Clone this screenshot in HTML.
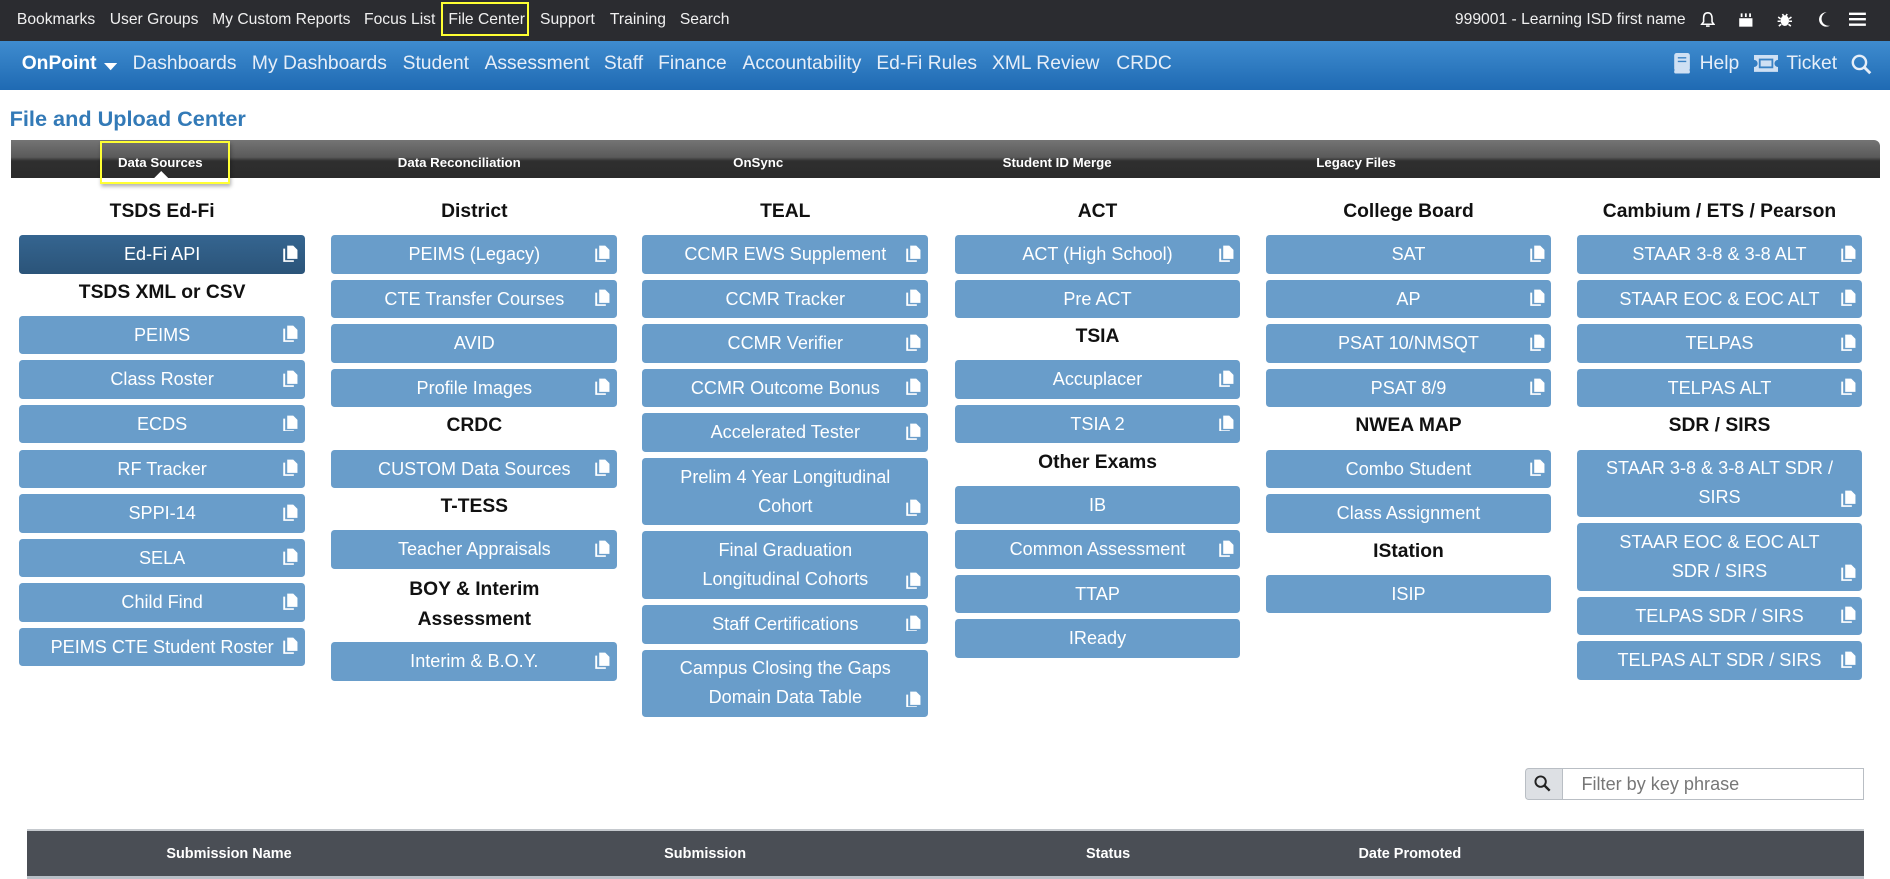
<!DOCTYPE html>
<html><head><meta charset="utf-8"><style>
html,body{margin:0;padding:0;background:#fff;overflow:hidden}
#w{zoom:1.2054;width:1568px;height:729px;position:relative;font-family:"Liberation Sans",Arial,sans-serif}
.top{position:absolute;left:0;top:0;width:1568px;height:34px;background:#2b2c30;color:#f0f0f0;font-size:13px}
.top span{position:absolute;top:9px}
.nav{position:absolute;left:0;top:34px;width:1568px;height:41px;background:linear-gradient(#3f8ccf,#1f6ab3);color:#e6eef8;font-size:16px}
.nav span{position:absolute;top:10px}
h1{position:absolute;left:8px;top:88px;margin:0;font-size:18px;color:#337ab7;font-weight:bold}
.tabs{position:absolute;left:9px;top:116px;width:1551px;height:32px;background:linear-gradient(#747474,#5a5a5a 45%,#2f2f2f 55%,#2b2b2b);border-top-right-radius:5px}
.tabs span{position:absolute;top:13px;width:248px;text-align:center;color:#fff;font-size:11px;font-weight:bold}
.col{position:absolute;top:148px;width:237px;padding-top:17px}
.h{height:30px;line-height:22px;text-align:center;font-weight:bold;font-size:16px;color:#111}
.b{height:32px;line-height:32px;margin-bottom:5px;background:#699dca;border-radius:3px;color:#fff;text-align:center;font-size:15px;position:relative}
.b.t{height:56px;line-height:24px;padding:4px 22px 0;box-sizing:border-box}
.b.d{background:linear-gradient(#356590,#2b5479)}
.b svg{position:absolute;right:5px;top:8px}
.b.t svg{top:auto;bottom:8px}
</style></head><body><div id="w">
<div class="top">
<span style="left:14px">Bookmarks</span><span style="left:91px">User Groups</span><span style="left:176px">My Custom Reports</span><span style="left:302px">Focus List</span><span style="left:372px">File Center</span><span style="left:448px">Support</span><span style="left:506px">Training</span><span style="left:564px">Search</span>
<div style="position:absolute;left:366px;top:2px;width:73px;height:28px;border:2px solid #ffff33;box-sizing:border-box"></div>
<span style="left:1207px">999001 - Learning ISD first name</span>
<svg style="position:absolute;left:1410px;top:9px" width="13" height="14" viewBox="0 0 13 14"><path d="M6.5 1.5C4 1.5 3 3.5 3 6v3L1.5 11h10L10 9V6c0-2.5-1-4.5-3.5-4.5z" fill="none" stroke="#fff" stroke-width="1.3"/><path d="M5 12.5h3" stroke="#fff" stroke-width="1.3"/></svg>
<svg style="position:absolute;left:1442px;top:9px" width="13" height="14" viewBox="0 0 13 14"><rect x="1" y="6" width="11" height="7" fill="#fff"/><path d="M3 2v3M6.5 2v3M10 2v3" stroke="#fff" stroke-width="1.5"/></svg>
<svg style="position:absolute;left:1474px;top:9px" width="13" height="14" viewBox="0 0 13 14"><ellipse cx="6.5" cy="8" rx="3.5" ry="4.5" fill="#fff"/><path d="M1 5l2 1.5M12 5l-2 1.5M0.5 8.5h2.5M12.5 8.5h-2.5M1.5 12.5l2-1.5M11.5 12.5l-2-1.5M4.5 2.5l1 1.5M8.5 2.5l-1 1.5" stroke="#fff" stroke-width="1.3"/></svg>
<svg style="position:absolute;left:1507px;top:9px" width="12" height="14" viewBox="0 0 12 14"><path d="M8 1a6 6 0 1 0 3 11A5 5 0 0 1 8 1z" fill="#fff"/></svg>
<svg style="position:absolute;left:1534px;top:10px" width="14" height="12" viewBox="0 0 14 12"><path d="M0 1.5h14M0 6h14M0 10.5h14" stroke="#fff" stroke-width="2"/></svg>
</div>
<div class="nav">
<span style="left:18px;color:#fff;font-weight:bold">OnPoint</span>
<svg style="position:absolute;left:86px;top:18px" width="11" height="7" viewBox="0 0 11 7"><path d="M0 0h11L5.5 6z" fill="#fff"/></svg>
<span style="left:110px">Dashboards</span><span style="left:209px">My Dashboards</span><span style="left:334px">Student</span><span style="left:402px">Assessment</span><span style="left:501px">Staff</span><span style="left:546px">Finance</span><span style="left:616px">Accountability</span><span style="left:727px">Ed-Fi Rules</span><span style="left:823px">XML Review</span><span style="left:926px">CRDC</span>
<svg style="position:absolute;left:1388px;top:10px" width="15" height="18" viewBox="0 0 15 18"><rect x="1" y="0" width="13" height="15" rx="2" fill="#cfe0f3"/><rect x="1" y="14" width="13" height="3" rx="1" fill="#cfe0f3"/><path d="M4 4h7M4 7h7" stroke="#3a82c4" stroke-width="1.2"/></svg>
<span style="left:1410px">Help</span>
<svg style="position:absolute;left:1455px;top:12px" width="20" height="14" viewBox="0 0 20 14"><path d="M0 0h20v4a3 3 0 0 0 0 6v4H0v-4a3 3 0 0 0 0-6z" fill="#cfe0f3"/><rect x="4" y="3" width="12" height="8" fill="#3a82c4"/><rect x="5.5" y="4.5" width="9" height="5" fill="#cfe0f3"/></svg>
<span style="left:1482px">Ticket</span>
<svg style="position:absolute;left:1536px;top:11px" width="17" height="17" viewBox="0 0 17 17"><circle cx="7" cy="7" r="5.5" fill="none" stroke="#e6eef8" stroke-width="2"/><path d="M11 11l5 5" stroke="#e6eef8" stroke-width="2.4"/></svg>
</div>
<h1>File and Upload Center</h1>
<div class="tabs">
<span style="left:0">Data Sources</span><span style="left:248px">Data Reconciliation</span><span style="left:496px">OnSync</span><span style="left:744px">Student ID Merge</span><span style="left:992px">Legacy Files</span>
<svg style="position:absolute;left:119px;top:26px" width="12" height="6" viewBox="0 0 12 6"><path d="M0 6L6 0l6 6z" fill="#fff"/></svg>
</div>
<div style="position:absolute;left:83px;top:117px;width:108px;height:36px;border:2px solid #ffff33;box-sizing:border-box;box-shadow:1px 2px 3px rgba(0,0,0,.3)"></div>

<svg width="0" height="0" style="position:absolute"><defs><symbol id="c" viewBox="0 0 13 14"><path d="M3.5 0.5h5l3.5 3.5v7.5h-8.5z" fill="#fff"/><path d="M1 3v10.5h8" fill="none" stroke="#fff" stroke-width="1.6"/></symbol></defs></svg>

<div class="col" style="left:16px">
<div class="h">TSDS Ed-Fi</div>
<div class="b d">Ed-Fi API<svg width="13" height="14"><use href="#c"/></svg></div>
<div class="h">TSDS XML or CSV</div>
<div class="b">PEIMS<svg width="13" height="14"><use href="#c"/></svg></div>
<div class="b">Class Roster<svg width="13" height="14"><use href="#c"/></svg></div>
<div class="b">ECDS<svg width="13" height="14"><use href="#c"/></svg></div>
<div class="b">RF Tracker<svg width="13" height="14"><use href="#c"/></svg></div>
<div class="b">SPPI-14<svg width="13" height="14"><use href="#c"/></svg></div>
<div class="b">SELA<svg width="13" height="14"><use href="#c"/></svg></div>
<div class="b">Child Find<svg width="13" height="14"><use href="#c"/></svg></div>
<div class="b">PEIMS CTE Student Roster<svg width="13" height="14"><use href="#c"/></svg></div>
</div>

<div class="col" style="left:275px">
<div class="h">District</div>
<div class="b">PEIMS (Legacy)<svg width="13" height="14"><use href="#c"/></svg></div>
<div class="b">CTE Transfer Courses<svg width="13" height="14"><use href="#c"/></svg></div>
<div class="b">AVID</div>
<div class="b">Profile Images<svg width="13" height="14"><use href="#c"/></svg></div>
<div class="h">CRDC</div>
<div class="b">CUSTOM Data Sources<svg width="13" height="14"><use href="#c"/></svg></div>
<div class="h">T-TESS</div>
<div class="b">Teacher Appraisals<svg width="13" height="14"><use href="#c"/></svg></div>
<div class="h" style="height:56px;line-height:25px">BOY &amp; Interim<br>Assessment</div>
<div class="b">Interim &amp; B.O.Y.<svg width="13" height="14"><use href="#c"/></svg></div>
</div>

<div class="col" style="left:533px">
<div class="h">TEAL</div>
<div class="b">CCMR EWS Supplement<svg width="13" height="14"><use href="#c"/></svg></div>
<div class="b">CCMR Tracker<svg width="13" height="14"><use href="#c"/></svg></div>
<div class="b">CCMR Verifier<svg width="13" height="14"><use href="#c"/></svg></div>
<div class="b">CCMR Outcome Bonus<svg width="13" height="14"><use href="#c"/></svg></div>
<div class="b">Accelerated Tester<svg width="13" height="14"><use href="#c"/></svg></div>
<div class="b t">Prelim 4 Year Longitudinal Cohort<svg width="13" height="14"><use href="#c"/></svg></div>
<div class="b t">Final Graduation Longitudinal Cohorts<svg width="13" height="14"><use href="#c"/></svg></div>
<div class="b">Staff Certifications<svg width="13" height="14"><use href="#c"/></svg></div>
<div class="b t">Campus Closing the Gaps Domain Data Table<svg width="13" height="14"><use href="#c"/></svg></div>
</div>

<div class="col" style="left:792px">
<div class="h">ACT</div>
<div class="b">ACT (High School)<svg width="13" height="14"><use href="#c"/></svg></div>
<div class="b">Pre ACT</div>
<div class="h">TSIA</div>
<div class="b">Accuplacer<svg width="13" height="14"><use href="#c"/></svg></div>
<div class="b">TSIA 2<svg width="13" height="14"><use href="#c"/></svg></div>
<div class="h">Other Exams</div>
<div class="b">IB</div>
<div class="b">Common Assessment<svg width="13" height="14"><use href="#c"/></svg></div>
<div class="b">TTAP</div>
<div class="b">IReady</div>
</div>

<div class="col" style="left:1050px">
<div class="h">College Board</div>
<div class="b">SAT<svg width="13" height="14"><use href="#c"/></svg></div>
<div class="b">AP<svg width="13" height="14"><use href="#c"/></svg></div>
<div class="b">PSAT 10/NMSQT<svg width="13" height="14"><use href="#c"/></svg></div>
<div class="b">PSAT 8/9<svg width="13" height="14"><use href="#c"/></svg></div>
<div class="h">NWEA MAP</div>
<div class="b">Combo Student<svg width="13" height="14"><use href="#c"/></svg></div>
<div class="b">Class Assignment</div>
<div class="h">IStation</div>
<div class="b">ISIP</div>
</div>

<div class="col" style="left:1308px">
<div class="h">Cambium / ETS / Pearson</div>
<div class="b">STAAR 3-8 &amp; 3-8 ALT<svg width="13" height="14"><use href="#c"/></svg></div>
<div class="b">STAAR EOC &amp; EOC ALT<svg width="13" height="14"><use href="#c"/></svg></div>
<div class="b">TELPAS<svg width="13" height="14"><use href="#c"/></svg></div>
<div class="b">TELPAS ALT<svg width="13" height="14"><use href="#c"/></svg></div>
<div class="h">SDR / SIRS</div>
<div class="b t">STAAR 3-8 &amp; 3-8 ALT SDR / SIRS<svg width="13" height="14"><use href="#c"/></svg></div>
<div class="b t">STAAR EOC &amp; EOC ALT SDR / SIRS<svg width="13" height="14"><use href="#c"/></svg></div>
<div class="b">TELPAS SDR / SIRS<svg width="13" height="14"><use href="#c"/></svg></div>
<div class="b">TELPAS ALT SDR / SIRS<svg width="13" height="14"><use href="#c"/></svg></div>
</div>

<div style="position:absolute;left:1265px;top:637px;width:32px;height:27px;background:#dde0e4;border:1px solid #b9bec4;box-sizing:border-box;border-radius:3px 0 0 3px"></div>
<svg style="position:absolute;left:1273px;top:643px" width="14" height="14" viewBox="0 0 14 14"><circle cx="5.5" cy="5.5" r="4.3" fill="none" stroke="#222" stroke-width="1.6"/><path d="M8.5 8.5l4.5 4.5" stroke="#222" stroke-width="2"/></svg>
<div style="position:absolute;left:1297px;top:637px;width:249px;height:27px;border:1px solid #b9bec4;border-left:0;box-sizing:border-box;color:#777;font-size:15px;line-height:25px;padding-left:15px">Filter by key phrase</div>

<div style="position:absolute;left:22px;top:688px;width:1524px;height:41px;background:#4a4e55;border-top:2px solid #c5c9ce;box-sizing:border-box;color:#fff;font-size:12px;font-weight:bold">
<span style="position:absolute;left:116px;top:12px">Submission Name</span><span style="position:absolute;left:529px;top:12px">Submission</span><span style="position:absolute;left:879px;top:12px">Status</span><span style="position:absolute;left:1105px;top:12px">Date Promoted</span>
</div>
<div style="position:absolute;left:22px;top:727px;width:1524px;height:2px;background:#b8bfc6"></div>
</div></body></html>
